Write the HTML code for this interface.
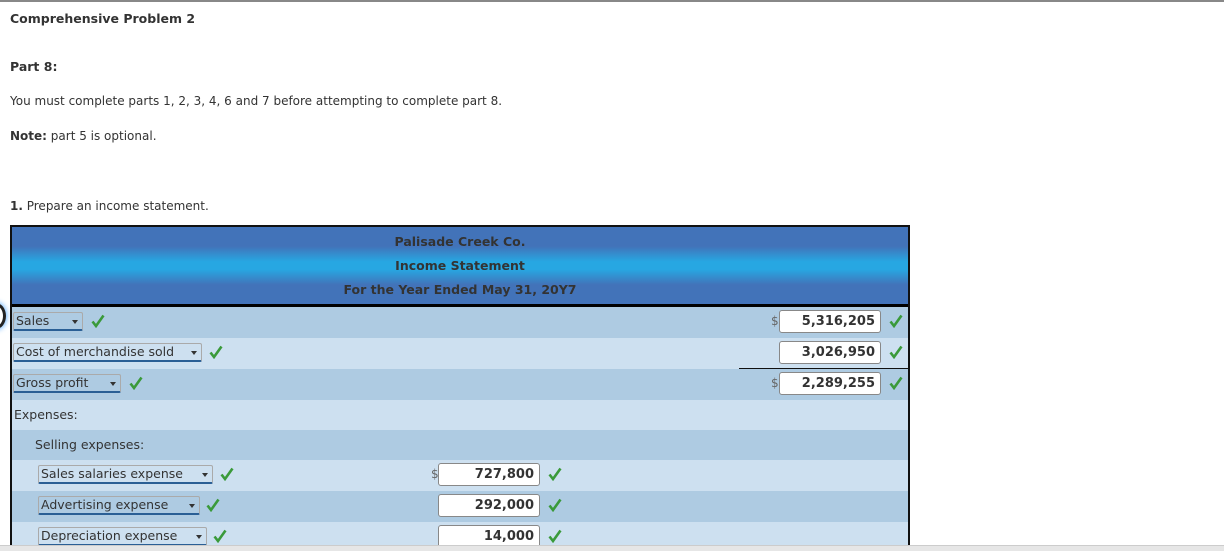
<!DOCTYPE html>
<html><head><style>
*{margin:0;padding:0;box-sizing:border-box}
html,body{width:1224px;height:551px;overflow:hidden}
body{background:#fff;font-family:"DejaVu Sans","Liberation Sans",sans-serif;font-size:12px;color:#333;position:relative}
.t{position:absolute;white-space:nowrap}
.tbl{position:absolute;left:10px;top:225px;width:900px;height:320px;border:2px solid #111;border-bottom:none;overflow:hidden}
.hdr{position:absolute;left:0;top:0;width:896px;height:80px;background:linear-gradient(#4273b9 0%,#4273b9 25%,#27a7e2 45%,#27a7e2 55%,#4273b9 75%,#4273b9 100%);border-bottom:3px solid #000}
.hdr div{position:absolute;width:100%;text-align:center;font-weight:bold;font-size:12.5px;color:#333}
.row{position:absolute;left:0;width:896px}
.d{background:#aecbe2}.l{background:#cde0f0}
.sel{position:absolute;height:19px;border:1px solid #aaa;border-bottom:2px solid #2a5f95;border-radius:2px;padding-left:2px;font-size:12.5px;line-height:16px;color:#333}
.sel:after{content:"";position:absolute;right:4px;top:7px;border:3px solid transparent;border-top:4px solid #333}
.ck{position:absolute;width:14px;height:14px}
.inp{position:absolute;height:23px;background:#fff;border:1px solid #888;border-radius:3px;text-align:right;padding-right:5px;font-weight:bold;font-size:13px;line-height:21px;color:#333}
.dl{position:absolute;color:#666;font-size:12px}
</style></head><body>
<svg width="0" height="0" style="position:absolute"><defs><symbol id="c" viewBox="0 0 14 14"><path d="M1.5 7.5 L5 12 L12.5 1.5" fill="none" stroke="#3a9a3a" stroke-width="2.6"/></symbol></defs></svg>
<div style="position:absolute;left:0;top:0;width:1224px;height:2px;background:#888"></div>
<div class="t" style="left:10px;top:11px;font-weight:bold;font-size:12.5px">Comprehensive Problem 2</div>
<div class="t" style="left:10px;top:59px;font-weight:bold;font-size:12.5px">Part 8:</div>
<div class="t" style="left:10px;top:94px">You must complete parts 1, 2, 3, 4, 6 and 7 before attempting to complete part 8.</div>
<div class="t" style="left:10px;top:129px"><b>Note:</b> part 5 is optional.</div>
<div class="t" style="left:10px;top:199px"><b>1.</b> Prepare an income statement.</div>
<div style="position:absolute;left:-14px;top:303px;width:20px;height:26px;border-radius:50%;border:3px solid #222;box-shadow:0 0 6px #39f"></div>
<div class="tbl">
<div class="hdr"><div style="top:7px">Palisade Creek Co.</div><div style="top:31px">Income Statement</div><div style="top:55px">For the Year Ended May 31, 20Y7</div></div>
<div class="row d" style="top:80px;height:31px"></div>
<div class="row l" style="top:111px;height:31px"></div>
<div class="row d" style="top:142px;height:31px"></div>
<div class="row l" style="top:173px;height:30px"></div>
<div class="row d" style="top:203px;height:30px"></div>
<div class="row l" style="top:233px;height:31px"></div>
<div class="row d" style="top:264px;height:31px"></div>
<div class="row l" style="top:295px;height:40px"></div>
<div style="position:absolute;left:727px;top:141px;width:170px;height:1px;background:#111"></div>
</div>
<div class="sel" style="left:13px;top:312px;width:70px">Sales</div><svg class="ck" style="left:91px;top:314px"><use href="#c"/></svg>
<div class="sel" style="left:13px;top:343px;width:189px">Cost of merchandise sold</div><svg class="ck" style="left:209px;top:345px"><use href="#c"/></svg>
<div class="sel" style="left:13px;top:374px;width:108px">Gross profit</div><svg class="ck" style="left:129px;top:376px"><use href="#c"/></svg>
<div class="t" style="left:14px;top:407px;font-size:12.5px">Expenses:</div>
<div class="t" style="left:35px;top:437px;font-size:12.5px">Selling expenses:</div>
<div class="sel" style="left:38px;top:465px;width:175px">Sales salaries expense</div><svg class="ck" style="left:220px;top:467px"><use href="#c"/></svg>
<div class="sel" style="left:38px;top:496px;width:162px">Advertising expense</div><svg class="ck" style="left:206px;top:498px"><use href="#c"/></svg>
<div class="sel" style="left:38px;top:527px;width:169px">Depreciation expense</div><svg class="ck" style="left:213px;top:529px"><use href="#c"/></svg>
<span class="dl" style="left:771px;top:314px">$</span><div class="inp" style="left:779px;top:310px;width:102px">5,316,205</div><svg class="ck" style="left:889px;top:314px"><use href="#c"/></svg>
<div class="inp" style="left:779px;top:341px;width:102px">3,026,950</div><svg class="ck" style="left:889px;top:345px"><use href="#c"/></svg>
<span class="dl" style="left:771px;top:376px">$</span><div class="inp" style="left:779px;top:372px;width:102px">2,289,255</div><svg class="ck" style="left:889px;top:376px"><use href="#c"/></svg>
<span class="dl" style="left:431px;top:467px">$</span><div class="inp" style="left:438px;top:463px;width:102px">727,800</div><svg class="ck" style="left:548px;top:467px"><use href="#c"/></svg>
<div class="inp" style="left:438px;top:494px;width:102px">292,000</div><svg class="ck" style="left:548px;top:498px"><use href="#c"/></svg>
<div class="inp" style="left:438px;top:525px;width:102px">14,000</div><svg class="ck" style="left:548px;top:529px"><use href="#c"/></svg>
<div style="position:absolute;left:0;top:545px;width:1224px;height:6px;background:#e6e6e6;border-top:1px solid #ccc"></div>
</body></html>
